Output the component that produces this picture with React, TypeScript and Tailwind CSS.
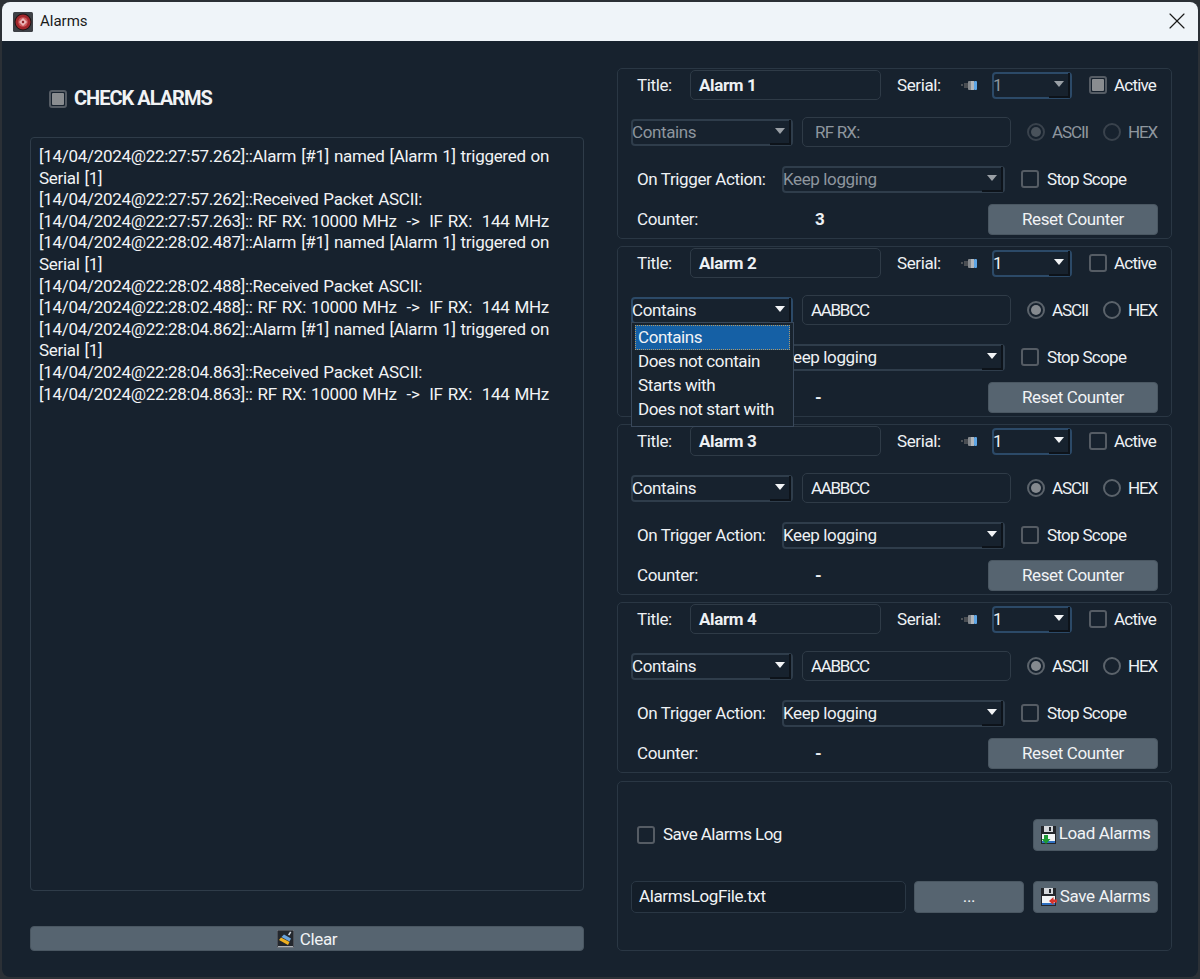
import { X } from "lucide-react";

const logLines = [
  "[14/04/2024@22:27:57.262]::Alarm [#1] named [Alarm 1] triggered on",
  "Serial [1]",
  "[14/04/2024@22:27:57.262]::Received Packet ASCII:",
  "[14/04/2024@22:27:57.263]:: RF RX: 10000 MHz  ->  IF RX:  144 MHz",
  "[14/04/2024@22:28:02.487]::Alarm [#1] named [Alarm 1] triggered on",
  "Serial [1]",
  "[14/04/2024@22:28:02.488]::Received Packet ASCII:",
  "[14/04/2024@22:28:02.488]:: RF RX: 10000 MHz  ->  IF RX:  144 MHz",
  "[14/04/2024@22:28:04.862]::Alarm [#1] named [Alarm 1] triggered on",
  "Serial [1]",
  "[14/04/2024@22:28:04.863]::Received Packet ASCII:",
  "[14/04/2024@22:28:04.863]:: RF RX: 10000 MHz  ->  IF RX:  144 MHz",
];

const alarms = [
  { title: "Alarm 1", filter: "RF RX:", active: true, counter: "3", dim: true },
  { title: "Alarm 2", filter: "AABBCC", active: false, counter: "-", dim: false, open: true },
  { title: "Alarm 3", filter: "AABBCC", active: false, counter: "-", dim: false },
  { title: "Alarm 4", filter: "AABBCC", active: false, counter: "-", dim: false },
];

const AppIcon = () => (
  <svg width="20" height="20" viewBox="0 0 20 20">
    <rect width="20" height="20" rx="1.5" fill="#3d4046" />
    <circle cx="10" cy="10" r="8.5" fill="#1d1416" />
    <circle cx="10" cy="10" r="7.5" fill="#a3262c" />
    <circle cx="10" cy="10" r="4.8" fill="#cf5a5e" />
    <path d="M10 6l4 4-4 4-4-4z" fill="#eab7b8" />
    <circle cx="10" cy="10" r="1.2" fill="#8f1f24" />
  </svg>
);

const UsbIcon = () => (
  <svg width="20" height="12" viewBox="0 0 20 12" className="shrink-0">
    <rect x="1" y="5" width="2" height="2" fill="#4c5156" />
    <rect x="4" y="4" width="4" height="5" fill="#4a4e53" />
    <rect x="8" y="2" width="6" height="9" rx="1" fill="#85898d" />
    <rect x="11" y="2" width="3" height="9" fill="#b4b7ba" />
    <rect x="14" y="2" width="3" height="9" rx="1" fill="#5ea6e6" />
  </svg>
);

const FloppyIcon = ({ save }: { save?: boolean }) => (
  <svg width="16" height="18" viewBox="0 0 16 18" className="shrink-0">
    <rect width="15" height="18" fill="#23262b" />
    <rect x="3" y="0" width="9" height="6" fill="#d5d8dc" />
    <rect x="8" y="1" width="2" height="4" fill="#23262b" />
    <rect x="1" y="8" width="13" height="9" fill="#f2f4f6" />
    <rect x="1" y="15" width="13" height="2" fill="#2f6fc0" />
    {save ? (
      <path d="M16 11.5h-3.5V9L8 13l4.5 4v-2.5H16z" fill="#d6332b" />
    ) : (
      <path d="M3 9h4v4h2.5L5 18 .5 13H3z" fill="#1f9a35" />
    )}
  </svg>
);

const BroomIcon = () => (
  <svg width="17" height="18" viewBox="0 0 17 18" className="shrink-0">
    <rect width="17" height="18" rx="1" fill="#23272d" stroke="#8a9097" strokeWidth="0.8" />
    <path d="M13 1.5l1.4.8-2 3.2-1.4-.8z" fill="#cfd6de" />
    <path d="M7 4.5l7 4-1.5 3-8-4.5z" fill="#6aa3dc" />
    <path d="M4 7.5l8.5 4.5-1.5 3L2 10z" fill="#eeb021" />
    <rect x="1" y="16" width="15" height="1.4" fill="#aab0b6" />
  </svg>
);

const Check = ({ on }: { on?: boolean }) => (
  <span className="w-[18px] h-[18px] shrink-0 rounded-[3px] border-2 border-[#555c64] flex items-center justify-center">
    {on && <span className="w-[12px] h-[12px] bg-[#8a8d90] rounded-[1px]" />}
  </span>
);

const Radio = ({ on, dim }: { on?: boolean; dim?: boolean }) => (
  <span
    className={`w-[18px] h-[18px] shrink-0 rounded-full border-2 flex items-center justify-center ${
      dim ? "border-[#39424c]" : "border-[#5b636b]"
    }`}
  >
    {on && <span className={`w-[10px] h-[10px] rounded-full ${dim ? "bg-[#49525b]" : "bg-[#858a8f]"}`} />}
  </span>
);

const Combo = ({ text, width, dim, hot }: { text: string; width: string; dim?: boolean; hot?: boolean }) => (
  <div
    className={`${width} h-[27px] shrink-0 rounded-[4px] border-2 flex items-center ${
      hot ? "border-[#2c4a68]" : "border-[#2f3d4b]"
    } ${dim ? "text-[#8e969e]" : "text-[#eef1f4]"}`}
  >
    <span className="flex-1 whitespace-pre pt-[2px] -ml-px">{text}</span>
    <span className="w-[21px] h-[25px] flex items-center justify-center border-r-2 border-b-2 border-[#0d131a]">
      <svg width="10" height="6" viewBox="0 0 10 6">
        <path d="M0 0h10L5 6z" fill={dim ? "#9aa0a6" : "#f2f4f6"} />
      </svg>
    </span>
  </div>
);

const Button = ({ children, className }: { children: React.ReactNode; className: string }) => (
  <div
    className={`${className} shrink-0 rounded-[4px] bg-[#566470] border border-[#4a5762] text-[#f1f3f5] flex items-center justify-center gap-[3px]`}
  >
    {children}
  </div>
);

const DropDown = () => (
  <div className="absolute left-[13px] top-[75px] w-[163px] h-[105px] bg-[#18232e] border border-[#39485a] px-[3px] pt-[2px] z-10 text-[#f1f3f5]">
    <div className="h-[25px] bg-[#1560a5] border border-dotted border-[#b09a6a] pl-[2px] flex items-center">Contains</div>
    <div className="h-[24px] pl-[3px] pb-[1px] flex items-center">Does not contain</div>
    <div className="h-[24px] pl-[3px] pb-[1px] flex items-center">Starts with</div>
    <div className="h-[24px] pl-[3px] pb-[1px] flex items-center">Does not start with</div>
  </div>
);

type Alarm = (typeof alarms)[number];

const AlarmPanel = ({ alarm }: { alarm: Alarm }) => (
  <div className="relative h-[171px] mb-[7px] rounded-[5px] border border-[#2a3744] px-[13px] pt-px text-[#eef1f4]">
    <div className="h-[30px] flex items-center">
      <span className="w-[59px] shrink-0 pl-[6px] pt-[2px]">Title:</span>
      <div className="w-[191px] shrink-0 h-[30px] rounded-[5px] border border-[#2f3b47] flex items-center pl-[8px] pt-[2px] font-bold">
        {alarm.title}
      </div>
      <span className="ml-[16px] w-[63px] shrink-0 pt-[2px]">Serial:</span>
      <UsbIcon />
      <div className="ml-[12px]">
        <Combo text="1" width="w-[80px]" dim={alarm.dim} hot />
      </div>
      <div className="ml-[17px]">
        <Check on={alarm.active} />
      </div>
      <span className="ml-[7px] pt-[2px] tracking-[-0.8px]">Active</span>
    </div>

    <div className={`mt-[17px] h-[30px] flex items-center ${alarm.dim ? "text-[#8e969e]" : ""}`}>
      <Combo text="Contains" width="w-[162px]" dim={alarm.dim} hot={alarm.open} />
      <div
        className={`ml-[9px] w-[209px] shrink-0 h-[30px] rounded-[5px] border border-[#2f3b47] flex items-center pt-[2px] ${
          alarm.dim ? "pl-[12px] tracking-[-0.8px]" : "pl-[8px] tracking-[-1.3px]"
        }`}
      >
        {alarm.filter}
      </div>
      <div className="ml-[16px]">
        <Radio on dim={alarm.dim} />
      </div>
      <span className="ml-[7px] w-[44px] shrink-0 pt-[2px] tracking-[-1.1px]">ASCII</span>
      <div className="ml-[7px]">
        <Radio dim={alarm.dim} />
      </div>
      <span className="ml-[7px] pt-[2px] tracking-[-1.2px]">HEX</span>
    </div>

    <div className="mt-[17px] h-[30px] flex items-center">
      <span className="w-[151px] shrink-0 pl-[6px] pt-[2px]">On Trigger Action:</span>
      <Combo text="Keep logging" width="w-[223px]" dim={alarm.dim} />
      <div className="ml-[16px]">
        <Check />
      </div>
      <span className="ml-[8px] pt-[2px] tracking-[-0.7px]">Stop Scope</span>
    </div>

    <div className="mt-[10px] h-[31px] flex items-center">
      <span className="w-[184px] shrink-0 pl-[6px]">Counter:</span>
      <span className="w-[173px] shrink-0 font-bold">{alarm.counter}</span>
      <Button className="w-[170px] h-[31px]">Reset Counter</Button>
    </div>

    {alarm.open && <DropDown />}
  </div>
);

export default function App() {
  return (
    <div
      className="w-[1200px] h-[979px] bg-[#2b3036] p-[2px] text-[17px] leading-[21.6px] tracking-[-0.38px] overflow-hidden"
      style={{ fontFamily: '"Roboto", "Liberation Sans", sans-serif' }}
    >
      <div className="h-[975px] rounded-[8px] overflow-hidden bg-[#17222e] flex flex-col">
        <div className="h-[39px] shrink-0 bg-[#eff4f9] flex items-center pl-[11px] pr-[7px] text-[#1a1a1a] text-[15px] tracking-normal">
          <AppIcon />
          <span className="ml-[7px] flex-1">Alarms</span>
          <X size={28} strokeWidth={1} className="mb-[2px]" />
        </div>

        <div className="flex-1 flex pl-[28px] pr-[26px] text-[#f1f3f5]">
          <div className="w-[554px] flex flex-col">
            <div className="h-[96px] shrink-0 flex items-center pl-[19px] pt-[19px] gap-[7px]">
              <Check on />
              <span className="text-[20px] font-bold tracking-[-1px]">CHECK ALARMS</span>
            </div>
            <div className="h-[754px] rounded-[4px] border border-[#2f3c49] pl-[8px] pt-[8px] tracking-[-0.3px] [word-spacing:1px]">
              {logLines.map((line, i) => (
                <div key={i} className="whitespace-pre">
                  {line}
                </div>
              ))}
            </div>
            <Button className="mt-[35px] h-[25px] w-full">
              <BroomIcon />
              <span className="ml-[3px] pt-[2px]">Clear</span>
            </Button>
          </div>

          <div className="ml-[33px] w-[555px] pt-[27px]">
            {alarms.map((a) => (
              <AlarmPanel key={a.title} alarm={a} />
            ))}
            <div className="mt-[8px] h-[170px] rounded-[5px] border border-[#2a3744] pl-[13px] pr-[13px] pt-[37px]">
              <div className="h-[31px] flex items-center">
                <div className="ml-[6px]">
                  <Check />
                </div>
                <span className="ml-[8px] flex-1 tracking-[-0.55px]">Save Alarms Log</span>
                <Button className="w-[125px] h-[32px]">
                  <FloppyIcon />
                  <span className="pb-[1px] -ml-px">Load Alarms</span>
                </Button>
              </div>
              <div className="mt-[31px] h-[32px] flex items-center">
                <div className="w-[275px] shrink-0 h-[32px] rounded-[5px] border border-[#2a3744] bg-[#141e29] flex items-center pl-[7px]">
                  AlarmsLogFile.txt
                </div>
                <Button className="ml-[8px] w-[110px] h-[32px]">...</Button>
                <Button className="ml-[9px] w-[125px] h-[32px]">
                  <FloppyIcon save />
                  Save Alarms
                </Button>
              </div>
            </div>
          </div>
        </div>
      </div>
    </div>
  );
}
